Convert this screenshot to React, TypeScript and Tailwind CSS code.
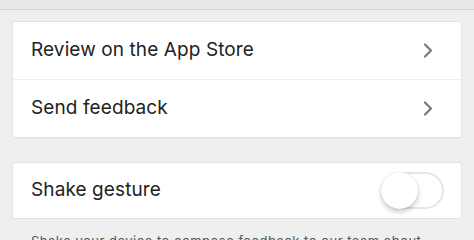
import React from "react";

function Chevron() {
  return (
    <svg width="10" height="15" viewBox="0 0 10 15" fill="none" className="shrink-0">
      <path d="M2 1.5 L8 7.5 L2 13.5" stroke="#7a7a7a" strokeWidth="2.2" strokeLinecap="round" strokeLinejoin="round" />
    </svg>
  );
}

export default function App() {
  return (
    <div className="w-[474px] h-[240px] overflow-hidden bg-[#efefef] text-[#222]" style={{ fontFamily: "Inter, 'Noto Sans', sans-serif" }}>
      <div className="h-[10px] bg-[#e8e8e8] border-b border-[#d7d7d7]" />
      <div className="px-3 pt-[11px]">
        <div className="bg-white rounded-[3px] border border-[#e4e4e4] shadow-[0_1px_1px_rgba(0,0,0,0.04)]">
          <div className="h-[58px] flex items-center justify-between pl-[18px] pr-[28px] border-b border-[#efefef]">
            <span className="text-[19px] tracking-[0.1px]">Review on the App Store</span>
            <Chevron />
          </div>
          <div className="h-[57px] flex items-center justify-between pl-[18px] pr-[28px]">
            <span className="text-[19px] tracking-[0.1px]">Send feedback</span>
            <Chevron />
          </div>
        </div>
        <div className="mt-[24px] bg-white rounded-[3px] border border-[#e4e4e4] h-[57px] flex items-center justify-between pl-[18px] pr-[17px]">
          <span className="text-[19px] tracking-[0.1px]">Shake gesture</span>
          <div className="w-[63px] h-[37px] rounded-full border-2 border-[#e6e6e6] bg-white relative">
            <div className="absolute left-[-2px] top-[-2px] w-[37px] h-[37px] rounded-full bg-white shadow-[0_3px_5px_rgba(0,0,0,0.22),0_0_1px_rgba(0,0,0,0.15)]" />
          </div>
        </div>
        <p className="mt-[14px] pl-[19px] text-[13px] leading-[16px] tracking-[0.5px] text-[#555]">
          Shake your device to compose feedback to our team about
        </p>
      </div>
    </div>
  );
}
